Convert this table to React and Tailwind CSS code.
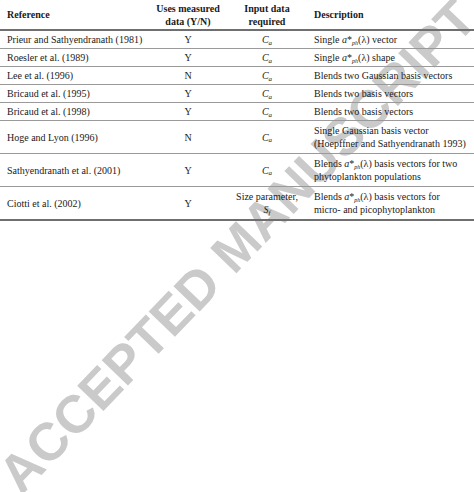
const rows = [
  { ref: "Prieur and Sathyendranath (1981)", yn: "Y", input: "ca", desc: <>Single <Aph /> vector</> },
  { ref: "Roesler et al. (1989)", yn: "Y", input: "ca", desc: <>Single <Aph /> shape</> },
  { ref: "Lee et al. (1996)", yn: "N", input: "ca", desc: "Blends two Gaussian basis vectors" },
  { ref: "Bricaud et al. (1995)", yn: "Y", input: "ca", desc: "Blends two basis vectors" },
  { ref: "Bricaud et al. (1998)", yn: "Y", input: "ca", desc: "Blends two basis vectors" },
  {
    ref: "Hoge and Lyon (1996)",
    yn: "N",
    input: "ca",
    desc: (
      <>
        Single Gaussian basis vector
        <br />
        (Hoepffner and Sathyendranath 1993)
      </>
    ),
  },
  {
    ref: "Sathyendranath et al. (2001)",
    yn: "Y",
    input: "ca",
    desc: (
      <>
        Blends <Aph /> basis vectors for two
        <br />
        phytoplankton populations
      </>
    ),
  },
  {
    ref: "Ciotti et al. (2002)",
    yn: "Y",
    input: "sf",
    desc: (
      <>
        Blends <Aph /> basis vectors for
        <br />
        micro- and picophytoplankton
      </>
    ),
  },
];

function Aph() {
  return (
    <span>
      <i>a</i>*<sub className="text-[6px] italic">ph</sub>(λ)
    </span>
  );
}

function Input({ kind }) {
  if (kind === "ca") {
    return (
      <span>
        <i>C</i>
        <sub className="text-[7px] italic">a</sub>
      </span>
    );
  }
  return (
    <span>
      Size parameter,
      <br />
      <i>S</i>
      <sub className="text-[7px] italic">f</sub>
    </span>
  );
}

export default function App() {
  return (
    <div className="relative w-[474px] h-[492px] bg-white overflow-hidden">
      {/* watermark */}
      <div className="absolute left-1/2 top-[246px] -translate-x-1/2 -translate-y-1/2 -rotate-[46deg] whitespace-nowrap text-[53px] font-bold text-[#cacaca] font-['Liberation_Sans',Arial,sans-serif] leading-none select-none pointer-events-none">
        ACCEPTED MANUSCRIPT
      </div>

      <table className="relative w-[474px] table-fixed border-collapse text-[10px] leading-[13px] text-[#1a1a1a] font-['Liberation_Serif','Times_New_Roman',serif]">
        <colgroup>
          <col className="w-[150px]" />
          <col className="w-[76px]" />
          <col className="w-[82px]" />
          <col />
        </colgroup>
        <thead>
          <tr className="border-b-2 border-[#6f6f6f] font-bold">
            <th className="h-[30px] pl-[7px] text-left align-middle font-bold">Reference</th>
            <th className="text-center align-middle font-bold">
              Uses measured
              <br />
              data (Y/N)
            </th>
            <th className="text-center align-middle font-bold">
              Input data
              <br />
              required
            </th>
            <th className="pl-[6px] text-left align-middle font-bold">Description</th>
          </tr>
        </thead>
        <tbody>
          {rows.map((r, i) => (
            <tr
              key={i}
              className={
                i === rows.length - 1
                  ? "border-b-2 border-[#6f6f6f]"
                  : "border-b border-[#9a9a9a]"
              }
            >
              <td className="pl-[7px] py-[2px] align-middle">{r.ref}</td>
              <td className="py-[2px] text-center align-middle">{r.yn}</td>
              <td className="py-[2px] text-center align-middle">
                <Input kind={r.input} />
              </td>
              <td
                className={
                  "pl-[6px] align-middle " + (typeof r.desc === "string" || i < 2 ? "h-[18px] py-[2px]" : "py-[3px]")
                }
              >
                {r.desc}
              </td>
            </tr>
          ))}
        </tbody>
      </table>
    </div>
  );
}
